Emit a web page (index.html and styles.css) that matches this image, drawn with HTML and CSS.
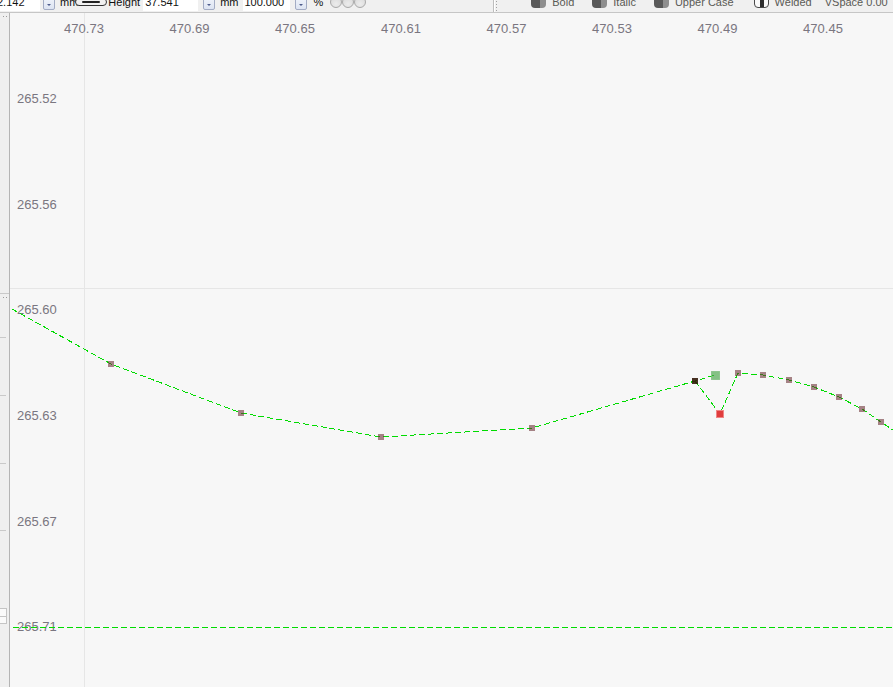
FILE: index.html
```html
<!DOCTYPE html>
<html lang="en">
<head>
    <meta charset="UTF-8">
    <title>Path Editor</title>
    <link rel="stylesheet" href="styles.css">
</head>
<body>
    <div class="toolbar">
        <div class="toolbar-row">
            <span class="field field-width">2.142</span>
            <span class="spin spin-a"></span>
            <span class="unit unit-a">mm</span>
            <span class="link"><i></i></span>
            <span class="label">Height</span>
            <span class="field field-height">37.541</span>
            <span class="spin spin-b"></span>
            <span class="unit unit-b">mm</span>
            <span class="field field-scale">100.000</span>
            <span class="spin spin-b"></span>
            <span class="unit unit-c">%</span>
            <span class="dots"><i></i><i></i><i></i></span>
            <span class="sep"></span>
            <span class="toggle toggle-first"></span><span class="opt">Bold</span>
            <span class="toggle"></span><span class="opt">Italic</span>
            <span class="toggle"></span><span class="opt">Upper Case</span>
            <span class="toggle toggle-on"></span><span class="opt">Welded</span>
            <span class="opt opt-vspace">VSpace 0.00</span>
        </div>
    </div>

    <div class="workspace">
        <div class="side">
            <div class="pane pane-top"><span class="grip"></span></div>
            <div class="pane pane-bottom">
                <span class="grip"></span>
                <span class="tick tick-1"></span>
                <span class="tick tick-2"></span>
                <span class="tick tick-3"></span>
                <span class="tick tick-4"></span>
                <span class="mini-box"></span>
            </div>
        </div>

        <div class="canvas">
            <svg width="883" height="674" viewBox="10 13 883 674">
                <!-- grid -->
                <line class="grid" x1="84.5" y1="13" x2="84.5" y2="687"/>
                <line class="grid" x1="10" y1="288.5" x2="893" y2="288.5"/>

                <!-- ruler labels -->
                <g class="ruler-x">
                    <text x="84" y="33">470.73</text>
                    <text x="189.5" y="33">470.69</text>
                    <text x="295" y="33">470.65</text>
                    <text x="401" y="33">470.61</text>
                    <text x="506.5" y="33">470.57</text>
                    <text x="612" y="33">470.53</text>
                    <text x="717.5" y="33">470.49</text>
                    <text x="823" y="33">470.45</text>
                </g>
                <g class="ruler-y">
                    <text x="17" y="103">265.52</text>
                    <text x="17" y="209">265.56</text>
                    <text x="17" y="314">265.60</text>
                    <text x="17" y="420">265.63</text>
                    <text x="17" y="525.5">265.67</text>
                    <text x="17" y="631">265.71</text>
                </g>

                <!-- path -->
                <polyline class="path" points="12,309 111,364 241,413 381,437 532,428 695,381 715,375"/>
                <polyline class="path" points="695,381 720,414 738,373 763,375 789,380 814,387 839,397 862,409 881,422 896,432"/>
                <line class="path" x1="13" y1="627.5" x2="893" y2="627.5"/>

                <!-- nodes, drawn over the path -->
                <g class="node">
                    <rect x="108" y="361" width="6" height="6"/>
                    <rect x="238" y="410" width="6" height="6"/>
                    <rect x="378" y="434" width="6" height="6"/>
                    <rect x="529" y="425" width="6" height="6"/>
                    <rect x="735" y="370" width="6" height="6"/>
                    <rect x="760" y="372" width="6" height="6"/>
                    <rect x="786" y="377" width="6" height="6"/>
                    <rect x="811" y="384" width="6" height="6"/>
                    <rect x="836" y="394" width="6" height="6"/>
                    <rect x="859" y="406" width="6" height="6"/>
                    <rect x="878" y="419" width="6" height="6"/>
                </g>
                <rect class="node-dark" x="692" y="378" width="6" height="6"/>
                <rect class="node-handle" x="711.5" y="371.5" width="8" height="8"/>
                <rect class="node-active" x="716.5" y="410.5" width="7" height="7"/>
            </svg>
        </div>
    </div>
</body>
</html>
```

FILE: styles.css
```css
html, body {
    margin: 0;
    padding: 0;
    height: 100%;
    overflow: hidden;
}
body {
    font-family: "Liberation Sans", Arial, sans-serif;
    background: #f7f7f7;
}

/* top toolbar, scrolled so only its lower half shows */
.toolbar {
    height: 12px;
    overflow: hidden;
    background: #f0f0f0;
    border-bottom: 1px solid #c6c6c6;
}
.toolbar-row {
    display: flex;
    align-items: center;
    height: 22px;
    margin-top: -9px;
    font-size: 11px;
    color: #111;
    white-space: nowrap;
}
.field {
    display: flex;
    align-items: center;
    height: 18px;
    background: #fff;
    box-sizing: border-box;
    padding-left: 2px;
    overflow: hidden;
}
.field-width {
    width: 40px;
    padding-left: 0;
    text-indent: -3px;
}
.field-height {
    width: 55px;
    margin-left: 3px;
}
.field-scale {
    width: 47px;
    margin-left: 5px;
    padding-left: 1px;
}
.spin {
    position: relative;
    width: 12px;
    height: 16px;
    box-sizing: border-box;
    border: 1px solid #a3acc4;
    border-radius: 2px;
    background: linear-gradient(#f4f7fc, #dde4f2);
}
.spin::after {
    content: "";
    position: absolute;
    left: 3px;
    top: 9px;
    border-left: 2px solid transparent;
    border-right: 2px solid transparent;
    border-top: 2px solid #4d5a8a;
}
.spin-a { margin-left: 3px; }
.spin-b { margin-left: 5px; }
.unit-a { margin-left: 5px; }
.unit-b { margin-left: 5px; }
.unit-c { margin-left: 6px; }

/* chain link between width and height */
.link {
    display: flex;
    align-items: center;
    justify-content: center;
    width: 32px;
    height: 8px;
    margin-left: -3px;
    box-sizing: border-box;
    border: 1px solid #333;
    border-radius: 5px;
    background: #f0f0f0;
}
.link i {
    display: block;
    width: 18px;
    height: 2px;
    background: #222;
    border-radius: 1px;
}
.label { margin-left: 1px; }

.dots {
    display: flex;
    margin-left: 7px;
}
.dots i {
    width: 12px;
    height: 12px;
    box-sizing: border-box;
    border: 1px solid #a9a9a9;
    border-radius: 50%;
    background: radial-gradient(circle at 50% 70%, #ececec, #d6d6d6);
}

.sep {
    width: 1px;
    height: 22px;
    margin-left: 127px;
    background: #bdbdbd;
    box-shadow: 1px 0 0 #fff;
    position: relative;
}
.sep::after {
    content: "";
    position: absolute;
    left: 3px;
    top: 10px;
    width: 1px;
    height: 10px;
    background: repeating-linear-gradient(#a0a0a0 0 1px, transparent 1px 3px);
}

.toggle {
    width: 15px;
    height: 12px;
    margin-left: 18px;
    box-sizing: border-box;
    border-radius: 4px;
    background: linear-gradient(90deg, #595959 0 9px, #8e8e8e 9px);
}
.toggle-first { margin-left: 37px; }
.toggle-on {
    margin-left: 20px;
    border: 1px solid #4a4a4a;
    background: linear-gradient(90deg, #fafafa 0 5px, #2e2e2e 5px 9px, #fafafa 9px);
}
.opt {
    margin-left: 6px;
    color: #5a5a55;
}
.opt-vspace { margin-left: 13px; }

/* main area */
.workspace {
    display: flex;
    height: 674px;
}
.side {
    display: flex;
    flex-direction: column;
    width: 9px;
    background: #efefef;
    border-right: 1px solid #b4b4b4;
}
.pane {
    display: flex;
    flex-direction: column;
}
.pane-top {
    height: 280px;
    border-bottom: 1px solid #c9c9c9;
}
.pane-bottom {
    flex: 1;
}
.grip {
    width: 4px;
    height: 1px;
    margin: 3px 0 0 3px;
    background: repeating-linear-gradient(90deg, #9a9a9a 0 1px, transparent 1px 3px);
}
.tick {
    width: 6px;
    height: 1px;
    background: #c9c9c9;
}
.tick-1 { margin-top: 39px; }
.tick-2 { margin-top: 57px; }
.tick-3 { margin-top: 67px; }
.tick-4 { margin-top: 66px; }
.mini-box {
    width: 7px;
    height: 16px;
    margin-top: 77px;
    box-sizing: border-box;
    border: 1px solid #c4c4c4;
    border-left: none;
    background: linear-gradient(#fafafa 0 7px, #c4c4c4 7px 8px, #fafafa 8px);
}

.canvas {
    flex: 1;
    background: #f7f7f7;
}
.canvas svg {
    display: block;
}
.grid {
    stroke: #e6e6e6;
    stroke-width: 1;
}
.ruler-x text,
.ruler-y text {
    font-family: "Liberation Sans", Arial, sans-serif;
    font-size: 13px;
    fill: #7a7680;
}
.ruler-x text {
    text-anchor: middle;
}
/* aliased dashed strokes, like the editor's own line drawing */
.path {
    fill: none;
    stroke: #00dc00;
    stroke-width: 1;
    stroke-dasharray: 6 3;
    shape-rendering: crispEdges;
}
.node rect {
    fill: rgba(105, 45, 50, 0.58);
}
.node-dark {
    fill: rgba(50, 25, 10, 0.9);
}
.node-handle {
    fill: rgba(70, 165, 70, 0.65);
    stroke: rgba(130, 190, 130, 0.8);
    stroke-width: 1;
}
.node-active {
    fill: #e03d3d;
    stroke: #f08585;
    stroke-width: 1;
}
```
